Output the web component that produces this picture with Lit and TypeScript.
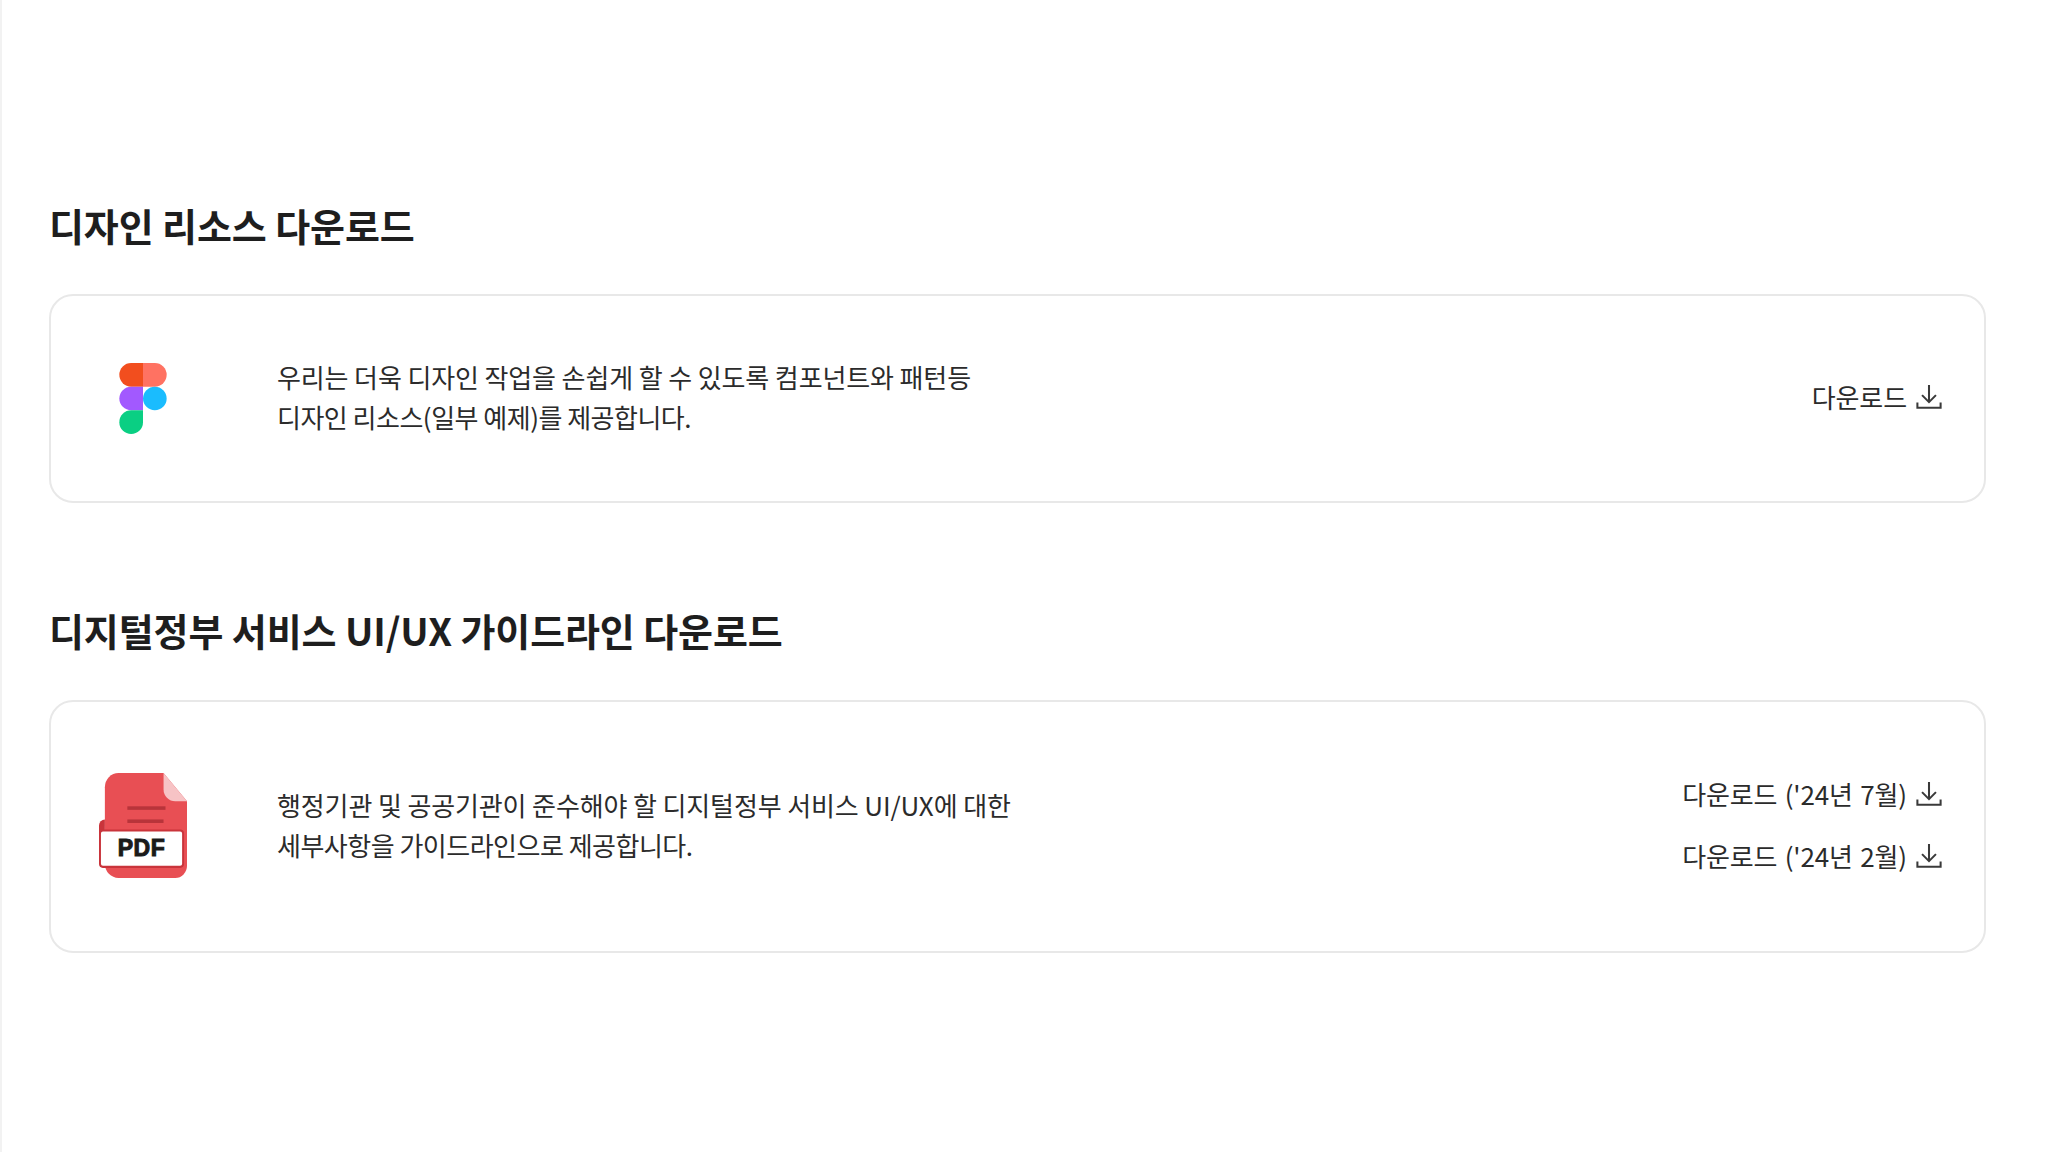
import {LitElement, html, css, svg} from 'lit';
import {customElement} from 'lit/decorators.js';

const downloadIcon = html`
  <svg class="dl-icon" viewBox="0 0 28 28" fill="none" stroke="#3a3a3a" stroke-width="2.2">
    <path d="M14 1v18M6.5 12l7.5 7.5 7.5-7.5" />
    <path d="M1.5 20v5.5h25V20" />
  </svg>
`;

const figmaLogo = html`
  <svg class="figma" viewBox="0 0 48 72">
    <path fill="#f24e1e" d="M24 0H12a12 12 0 0 0 0 24h12z" />
    <path fill="#ff7262" d="M24 0h12a12 12 0 0 1 0 24H24z" />
    <path fill="#a259ff" d="M24 24H12a12 12 0 0 0 0 24h12z" />
    <circle fill="#1abcfe" cx="36" cy="36" r="12" />
    <path fill="#0acf83" d="M24 48H12a12 12 0 1 0 12 12z" />
  </svg>
`;

const pdfLogo = html`
  <div class="pdf">
    <svg class="pdf-sheet" viewBox="0 2 90 106" preserveAspectRatio="none">
      ${svg`
        <path fill="#e84f54" d="M6 16a14 14 0 0 1 14-14h46l24 28v64a12 12 0 0 1-12 12H20a14 14 0 0 1-14-14z" />
        <path fill="#f7c3c5" d="M66 2l24 28H78a12 12 0 0 1-12-12z" />
        <path fill="#c9343b" d="M0 54a6 6 0 0 1 6-6v48a6 6 0 0 1-6-6z" />
        <rect fill="#b8343a" x="29" y="35" width="39" height="3.5" />
        <rect fill="#b8343a" x="29" y="48" width="37" height="3.5" />
        <rect fill="#fff" stroke="#c9343b" stroke-width="2" x="1" y="59" width="85" height="36" rx="3" />
      `}
    </svg>
    <span class="pdf-label">PDF</span>
  </div>
`;

@customElement('app-root')
export class AppRoot extends LitElement {
  static styles = css`
    :host {
      display: block;
      height: 1152px;
      background: #fff;
      box-sizing: border-box;
      border-left: 2px solid #f2f2f2;
      padding: 199px 62px 0 47px;
      overflow: hidden;
      color: #1e1e1e;
      font-family: 'Noto Sans CJK KR', 'Noto Sans', sans-serif;
    }

    h2 {
      margin: 0;
      font-size: 38px;
      line-height: 52px;
      font-weight: 700;
      letter-spacing: -0.1px;
    }

    .card {
      display: flex;
      align-items: center;
      box-sizing: border-box;
      margin-top: 43px;
      border: 2px solid #e8e8e8;
      border-radius: 24px;
      padding: 0 42px 0 48px;
    }

    .card.figma-card {
      height: 209px;
      margin-bottom: 101px;
    }

    .card.pdf-card {
      height: 253px;
      margin-top: 44px;
    }

    .logo {
      flex: none;
      width: 178px;
      display: flex;
    }

    .figma {
      width: 48px;
      height: 71px;
      margin-left: 20px;
    }

    .pdf {
      position: relative;
      width: 88px;
      height: 107px;
    }

    .pdf-sheet {
      display: block;
      width: 88px;
      height: 107px;
    }

    .pdf-label {
      position: absolute;
      left: 0;
      right: 3px;
      top: 57px;
      line-height: 36px;
      text-align: center;
      font-size: 23px;
      font-weight: 700;
      letter-spacing: 0.5px;
      color: #1a1a1a;
      -webkit-text-stroke: 1px #1a1a1a;
      font-family: 'Liberation Sans', sans-serif;
    }

    .desc {
      flex: 1;
      margin: 0;
      padding-bottom: 4px;
      font-size: 26px;
      line-height: 40px;
      letter-spacing: -0.12px;
      color: #2b2b2b;
    }

    .tight {
      letter-spacing: -0.5px;
    }

    .links {
      display: flex;
      flex-direction: column;
      align-items: flex-end;
      gap: 26px;
      padding-bottom: 3px;
    }

    .link {
      display: flex;
      align-items: center;
      gap: 9px;
      font-size: 26px;
      line-height: 36px;
      letter-spacing: -0.1px;
      word-spacing: 1.5px;
      color: #2b2b2b;
    }

    .dl-icon {
      width: 26px;
      height: 26px;
      flex: none;
    }
  `;

  render() {
    return html`
      <h2>디자인 리소스 다운로드</h2>
      <div class="card figma-card">
        <div class="logo">${figmaLogo}</div>
        <p class="desc">
          우리는 더욱 디자인 작업을 손쉽게 할 수 있도록 컴포넌트와 패턴등<br />
          <span class="tight">디자인 리소스(일부 예제)를 제공합니다.</span>
        </p>
        <div class="links">
          <div class="link">다운로드 ${downloadIcon}</div>
        </div>
      </div>

      <h2>디지털정부 서비스 UI/UX 가이드라인 다운로드</h2>
      <div class="card pdf-card">
        <div class="logo">${pdfLogo}</div>
        <p class="desc">
          행정기관 및 공공기관이 준수해야 할 디지털정부 서비스 UI/UX에 대한<br />
          <span class="tight">세부사항을 가이드라인으로 제공합니다.</span>
        </p>
        <div class="links">
          <div class="link">다운로드 ('24년 7월) ${downloadIcon}</div>
          <div class="link">다운로드 ('24년 2월) ${downloadIcon}</div>
        </div>
      </div>
    `;
  }
}
